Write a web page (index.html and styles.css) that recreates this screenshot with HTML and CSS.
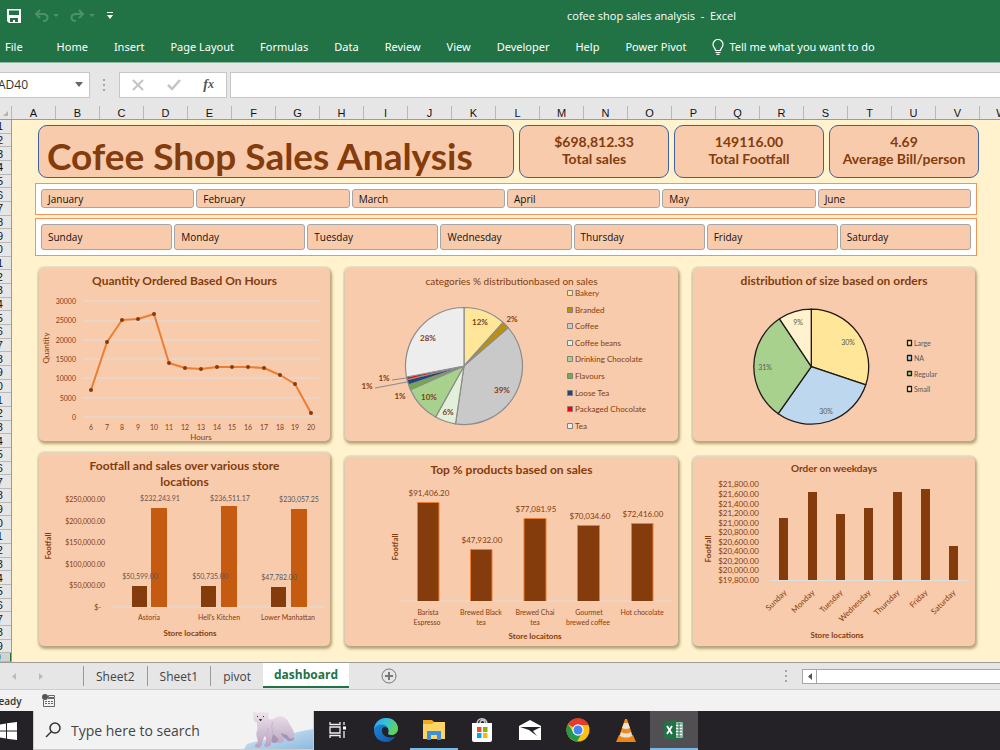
FILE: index.html
```
<!DOCTYPE html>
<html lang="en">
<head>
    <meta charset="UTF-8">
    <meta name="viewport" content="width=device-width, initial-scale=1.0">
    <title>cofee shop sales analysis - Excel</title>
    <link rel="stylesheet" href="styles.css">
</head>
<body>

<header class="ribbon">
    <div class="titlebar">
        <div class="quick-access">
            <button aria-label="Save"><svg width="14" height="14" viewBox="0 0 14 14"><path d="M0 0H14V14H2L0 12Z" fill="#fff"/><path d="M2 1.500H12V6H2ZM3 9H11V13H8V11H6V13H3Z" fill="#217346"/></svg></button>
            <button aria-label="Undo"><svg width="26" height="14" viewBox="0 0 26 14" fill="none" stroke="#4d9069" stroke-width="2"><path d="M6 1L2 5L6 9M2 5H9C15 5 15 12 9 12"/><path d="M19 5H25L22 8Z" fill="#4d9069" stroke="none"/></svg></button>
            <button aria-label="Redo"><svg width="26" height="14" viewBox="0 0 26 14" fill="none" stroke="#4d9069" stroke-width="2"><path d="M10 1L14 5L10 9M14 5H7C1 5 1 12 7 12"/><path d="M20 5H26L23 8Z" fill="#4d9069" stroke="none"/></svg></button>
            <button aria-label="Customize"><svg width="6" height="8" viewBox="0 0 6 8" fill="#fff"><path d="M0 0H6V1H0ZM0 3H6L3 7Z"/></svg></button>
        </div>
        <div class="doc-title">cofee shop sales analysis&nbsp; -&nbsp; Excel</div>
    </div>
    <nav class="tabs">
        <a href="#" class="file-tab">File</a>
        <a href="#">Home</a>
        <a href="#">Insert</a>
        <a href="#">Page Layout</a>
        <a href="#">Formulas</a>
        <a href="#">Data</a>
        <a href="#">Review</a>
        <a href="#">View</a>
        <a href="#">Developer</a>
        <a href="#">Help</a>
        <a href="#">Power Pivot</a>
        <a href="#" class="tell-me"><svg width="12" height="16" viewBox="0 0 12 16" fill="none" stroke="#fff" stroke-width="1.2"><path d="M3.500 11.500C3.500 9 1 8.500 1 5.500A5 5 0 0 1 11 5.500C11 8.500 8.500 9 8.500 11.500ZM3.500 13.500H8.500M4.500 15.300H7.500"/></svg>Tell me what you want to do</a>
    </nav>
</header>

<div class="formula-row">
    <div class="name-box">
        <input type="text" value="AD40" aria-label="Name box">
        <svg width="8" height="5" viewBox="0 0 8 5"><path d="M0 0H8L4 5Z" fill="#666"/></svg>
    </div>
    <svg class="dots" width="3" height="12" viewBox="0 0 3 12" fill="#a5a5a5"><path d="M0 0H2V2H0ZM0 5H2V7H0ZM0 10H2V12H0Z"/></svg>
    <div class="formula-buttons">
        <button aria-label="Cancel"><svg width="12" height="12" viewBox="0 0 12 12" stroke="#c4c4c4" stroke-width="2"><path d="M1 1L11 11M11 1L1 11"/></svg></button>
        <button aria-label="Enter"><svg width="14" height="12" viewBox="0 0 14 12" fill="none" stroke="#c4c4c4" stroke-width="2.500"><path d="M1 6L5 10L13 1"/></svg></button>
        <button class="fx">f<small>x</small></button>
    </div>
    <input class="formula-input" type="text" aria-label="Formula bar">
</div>

<div class="column-heads">
    <div class="corner"><svg width="5" height="5" viewBox="0 0 5 5"><path d="M5 0V5H0Z" fill="#b5b5b5"/></svg></div>
    <span>A</span><span>B</span><span>C</span><span>D</span><span>E</span><span>F</span><span>G</span><span>H</span><span>I</span><span>J</span><span>K</span><span>L</span><span>M</span><span>N</span><span>O</span><span>P</span><span>Q</span><span>R</span><span>S</span><span>T</span><span>U</span><span>V</span><span>W</span>
</div>

<main class="sheet">
    <div class="row-heads">
        <span>1</span><span>2</span><span>3</span><span>4</span><span>5</span><span>6</span><span>7</span><span>8</span><span>9</span><span>10</span>
        <span>11</span><span>12</span><span>13</span><span>14</span><span>15</span><span>16</span><span>17</span><span>18</span><span>19</span><span>20</span>
        <span>21</span><span>22</span><span>23</span><span>24</span><span>25</span><span>26</span><span>27</span><span>28</span><span>29</span><span>30</span>
        <span>31</span><span>32</span><span>33</span><span>34</span><span>35</span><span>36</span><span>37</span><span>38</span><span>39</span><span class="selected">40</span>
    </div>

    <div class="dashboard">
        <div class="summary">
            <h1>Cofee Shop Sales Analysis</h1>
            <div class="kpi">$698,812.33<br>Total sales</div>
            <div class="kpi">149116.00<br>Total Footfall</div>
            <div class="kpi">4.69<br>Average Bill/person</div>
        </div>

        <div class="slicers">
            <div class="slicer months">
                <button>January</button><button>February</button><button>March</button><button>April</button><button>May</button><button>June</button>
            </div>
            <div class="slicer days">
                <button>Sunday</button><button>Monday</button><button>Tuesday</button><button>Wednesday</button><button>Thursday</button><button>Friday</button><button>Saturday</button>
            </div>
        </div>

        <div class="charts">
            <section class="card">
                <h2>Quantity Ordered Based On Hours</h2>
                <svg viewBox="39 294 291 147">
                    <path class="grid" d="M83 301H319M83 321H319M83 340H319M83 359H319M83 378H319M83 398H319M83 417H319"/>
                    <g class="end">
                        <text x="76" y="301">30000</text><text x="76" y="320">25000</text><text x="76" y="340">20000</text><text x="76" y="359">15000</text><text x="76" y="378">10000</text><text x="76" y="398">5000</text><text x="76" y="417">0</text>
                    </g>
                    <polyline class="series" points="91,390 107,342 122,320 138,319 154,314 169,363 185,368 201,369 217,367 232,367 248,367 264,368 280,375 295,384 311,413"/>
                    <g fill="#843c0c">
                        <circle cx="91" cy="390" r="2"/><circle cx="107" cy="342" r="2"/><circle cx="122" cy="320" r="2"/><circle cx="138" cy="319" r="2"/><circle cx="154" cy="314" r="2"/><circle cx="169" cy="363" r="2"/><circle cx="185" cy="368" r="2"/><circle cx="201" cy="369" r="2"/><circle cx="217" cy="367" r="2"/><circle cx="232" cy="367" r="2"/><circle cx="248" cy="367" r="2"/><circle cx="264" cy="368" r="2"/><circle cx="280" cy="375" r="2"/><circle cx="295" cy="384" r="2"/><circle cx="311" cy="413" r="2"/>
                    </g>
                    <text x="91" y="427">6</text><text x="107" y="427">7</text><text x="122" y="427">8</text><text x="138" y="427">9</text><text x="154" y="427">10</text><text x="169" y="427">11</text><text x="185" y="427">12</text><text x="201" y="427">13</text><text x="217" y="427">14</text><text x="232" y="427">15</text><text x="248" y="427">16</text><text x="264" y="427">17</text><text x="280" y="427">18</text><text x="295" y="427">19</text><text x="311" y="427">20</text>
                    <text class="medium" x="201" y="437">Hours</text>
                    <text class="medium" transform="translate(46 348) rotate(-90)">Quantity</text>
                </svg>
            </section>

            <section class="card">
                <h2 class="light">categories % distributionbased on sales</h2>
                <svg viewBox="345 289 333 152">
                    <g stroke="#8c8c8c" stroke-width="1.200" stroke-linejoin="round">
                        <path fill="#ffe699" d="M464 366V307.500A58.500 58.500 0 0 1 503.100 322.500Z"/>
                        <path fill="#bf9000" d="M464 366L503.100 322.500A58.500 58.500 0 0 1 508.300 327.800Z"/>
                        <path fill="#c9c9c9" d="M464 366L508.300 327.800A58.500 58.500 0 0 1 455.500 423.900Z"/>
                        <path fill="#e2f0d9" d="M464 366L455.500 423.900A58.500 58.500 0 0 1 435.500 417.100Z"/>
                        <path fill="#a9d18e" d="M464 366L435.500 417.100A58.500 58.500 0 0 1 410.500 389.700Z"/>
                        <path fill="#70ad47" d="M464 366L410.500 389.700A58.500 58.500 0 0 1 408.600 384.800Z"/>
                        <path fill="#264478" d="M464 366L408.600 384.800A58.500 58.500 0 0 1 407.100 379.600Z"/>
                        <path fill="#ff0000" d="M464 366L407.100 379.600A58.500 58.500 0 0 1 406.500 377Z"/>
                        <path fill="#ededed" d="M464 366L406.500 377A58.500 58.500 0 0 1 464 307.500Z"/>
                        <path fill="none" d="M392 380L406 378M375 388L407 382"/>
                    </g>
                    <g class="large strong">
                        <text x="480" y="322">12%</text><text x="512" y="319">2%</text><text x="502" y="390">39%</text><text x="448" y="412">6%</text><text x="429" y="397">10%</text><text x="400" y="396">1%</text><text x="367" y="386">1%</text><text x="384" y="378">1%</text><text x="428" y="338">28%</text>
                    </g>
                    <g stroke="#7f7f7f">
                        <path fill="#ffe699" d="M567.500 290.500h5v5h-5z"/><path fill="#bf9000" d="M567.500 307.500h5v5h-5z"/><path fill="#c9c9c9" d="M567.500 323.500h5v5h-5z"/><path fill="#e2f0d9" d="M567.500 340.500h5v5h-5z"/><path fill="#a9d18e" d="M567.500 356.500h5v5h-5z"/><path fill="#70ad47" d="M567.500 373.500h5v5h-5z"/><path fill="#264478" d="M567.500 390.500h5v5h-5z"/><path fill="#ff0000" d="M567.500 406.500h5v5h-5z"/><path fill="#ededed" d="M567.500 423.500h5v5h-5z"/>
                    </g>
                    <g class="medium start">
                        <text x="575" y="293">Bakery</text><text x="575" y="310">Branded</text><text x="575" y="326">Coffee</text><text x="575" y="343">Coffee beans</text><text x="575" y="359">Drinking Chocolate</text><text x="575" y="376">Flavours</text><text x="575" y="393">Loose Tea</text><text x="575" y="409">Packaged Chocolate</text><text x="575" y="426">Tea</text>
                    </g>
                </svg>
            </section>

            <section class="card">
                <h2>distribution of size based on orders</h2>
                <svg viewBox="693 294 282 147">
                    <g stroke="#1f1a17" stroke-width="1.300" stroke-linejoin="round">
                        <path fill="#ffe699" d="M811.300 366.700V309.200A57.500 57.500 0 0 1 865.800 384.800Z"/>
                        <path fill="#bdd7ee" d="M811.300 366.700L865.800 384.800A57.500 57.500 0 0 1 778.200 413.700Z"/>
                        <path fill="#a9d18e" d="M811.300 366.700L778.200 413.700A57.500 57.500 0 0 1 779.500 318.800Z"/>
                        <path fill="#fff2cc" d="M811.300 366.700L779.500 318.800A57.500 57.500 0 0 1 811.300 309.200Z"/>
                        <path fill="#ffe699" d="M907.500 340.500h4v5h-4z"/><path fill="#bdd7ee" d="M907.500 355.500h4v5h-4z"/><path fill="#a9d18e" d="M907.500 371.500h4v4h-4z"/><path fill="#fff2cc" d="M907.500 386.500h4v5h-4z"/>
                    </g>
                    <g class="dark">
                        <text x="848" y="342">30%</text><text x="826" y="411">30%</text><text x="765" y="367">31%</text><text x="798" y="322">9%</text>
                    </g>
                    <g class="dark start">
                        <text x="914" y="343">Large</text><text x="914" y="358">NA</text><text x="914" y="374">Regular</text><text x="914" y="389">Small</text>
                    </g>
                </svg>
            </section>

            <section class="card">
                <h2>Footfall and sales over various store locations</h2>
                <svg viewBox="39 490 291 156">
                    <g class="end">
                        <text x="105" y="499">$250,000.00</text><text x="105" y="521">$200,000.00</text><text x="105" y="542">$150,000.00</text><text x="105" y="564">$100,000.00</text><text x="105" y="585">$50,000.00</text><text x="101" y="607">$-</text>
                    </g>
                    <path class="grid" d="M113 607H324"/>
                    <path fill="#843c0c" d="M132 586h15v21h-15zM201 586h15v21h-15zM271 587h15v20h-15z"/>
                    <path fill="#c55a11" d="M151 508h16v99h-16zM221 506h16v101h-16zM291 509h16v98h-16z"/>
                    <g class="dark">
                        <text x="160" y="498">$232,243.91</text><text x="230" y="498">$236,511.17</text><text x="299" y="499">$230,057.25</text>
                        <text x="140" y="576">$50,599.00</text><text x="210" y="576">$50,735.00</text><text x="279" y="577">$47,782.00</text>
                    </g>
                    <text x="149" y="617">Astoria</text><text x="219" y="617">Hell's Kitchen</text><text x="288" y="617">Lower Manhattan</text>
                    <text class="bold" x="190" y="633">Store locations</text>
                    <text class="bold" transform="translate(48 546) rotate(-90)">Footfall</text>
                </svg>
            </section>

            <section class="card short">
                <h2>Top % products based on sales</h2>
                <svg viewBox="345 483 333 163">
                    <path class="grid" d="M401 601H671"/>
                    <path fill="#843c0c" stroke="#ed7d31" d="M417.500 601V502.500h21.500V601M470.500 601V549.500h21.500V601M524 601V518.500h22V601M577.500 601V525.500h22V601M631.500 601V523.500h21.500V601"/>
                    <g class="large">
                        <text x="429" y="493">$91,406.20</text><text x="482" y="540">$47,932.00</text><text x="536" y="509">$77,081.95</text><text x="590" y="516">$70,034.60</text><text x="643" y="514">$72,416.00</text>
                    </g>
                    <text x="428" y="612">Barista</text><text x="427" y="622">Espresso</text>
                    <text x="481" y="612">Brewed Black</text><text x="481" y="622">tea</text>
                    <text x="535" y="612">Brewed Chai</text><text x="535" y="622">tea</text>
                    <text x="589" y="612">Gourmet</text><text x="588" y="622">brewed coffee</text>
                    <text x="642" y="612">Hot chocolate</text>
                    <text class="bold" x="535" y="636">Store locaitons</text>
                    <text class="bold" transform="translate(395 547) rotate(-90)">Footfall</text>
                </svg>
            </section>

            <section class="card short">
                <h2 class="small">Order on weekdays</h2>
                <svg viewBox="693 479 282 167">
                    <g class="large end">
                        <text x="759" y="484">$21,800.00</text><text x="759" y="494">$21,600.00</text><text x="759" y="504">$21,400.00</text><text x="759" y="513">$21,200.00</text><text x="759" y="523">$21,000.00</text><text x="759" y="532">$20,800.00</text><text x="759" y="542">$20,600.00</text><text x="759" y="551">$20,400.00</text><text x="759" y="561">$20,200.00</text><text x="759" y="570">$20,000.00</text><text x="759" y="580">$19,800.00</text>
                    </g>
                    <path class="grid" d="M770 580.500H967"/>
                    <path fill="#843c0c" d="M779 518h9v62h-9zM808 492h9v88h-9zM836 514h9v66h-9zM864 508h9v72h-9zM893 492h9v88h-9zM921 489h9v91h-9zM949 546h9v34h-9z"/>
                    <g class="medium end">
                        <text transform="translate(785 591) rotate(-45)">Sunday</text><text transform="translate(813 591) rotate(-45)">Monday</text><text transform="translate(841 591) rotate(-45)">Tuesday</text><text transform="translate(869 591) rotate(-45)">Wednesday</text><text transform="translate(898 591) rotate(-45)">Thursday</text><text transform="translate(926 591) rotate(-45)">Friday</text><text transform="translate(954 591) rotate(-45)">Saturday</text>
                    </g>
                    <text class="bold" x="837" y="635">Store locations</text>
                    <text class="bold" transform="translate(708 549) rotate(-90)">Footfall</text>
                </svg>
            </section>
        </div>
    </div>
</main>

<div class="sheet-tabs">
    <div class="arrows">
        <svg width="4" height="7" viewBox="0 0 4 7"><path d="M4 0V7L0 3.500Z" fill="#bbb"/></svg>
        <svg width="4" height="7" viewBox="0 0 4 7"><path d="M0 0V7L4 3.500Z" fill="#bbb"/></svg>
    </div>
    <button class="sheet-tab">Sheet2</button>
    <button class="sheet-tab">Sheet1</button>
    <button class="sheet-tab">pivot</button>
    <button class="sheet-tab active">dashboard</button>
    <button class="add-sheet" aria-label="New sheet"><svg width="16" height="16" viewBox="0 0 16 16" fill="none" stroke="#777"><circle cx="8" cy="8" r="7"/><path d="M8 4V12M4 8H12" stroke-width="2"/></svg></button>
    <svg class="tab-dots" width="3" height="12" viewBox="0 0 3 12" fill="#a5a5a5"><path d="M0 0H2V2H0ZM0 5H2V7H0ZM0 10H2V12H0Z"/></svg>
    <div class="scrollbar"><button aria-label="Scroll left"><svg width="4" height="7" viewBox="0 0 4 7"><path d="M4 0V7L0 3.500Z" fill="#555"/></svg></button></div>
</div>

<div class="status-bar">
    <span>Ready</span>
    <svg width="13" height="13" viewBox="0 0 13 13"><path d="M6.500 1.500H12.500V3.500H6.500ZM1.500 6V12.500H12.500V4.500H6" fill="none" stroke="#666"/><path d="M3 7H5V8H3ZM6 7H8V8H6ZM9 7H11V8H9ZM3 9H5V10H3ZM6 9H8V10H6ZM9 9H11V10H9Z" fill="#666"/><circle cx="3" cy="3" r="3" fill="#555"/></svg>
</div>

<footer class="taskbar">
    <button class="start" aria-label="Start"><svg width="20" height="18" viewBox="0 0 20 18" fill="#fff"><path d="M0 3L9 1.500V8.500H0ZM10 1.300L20 0V8.500H10ZM0 9.500H9V16.500L0 15ZM10 9.500H20V18L10 16.700Z"/></svg></button>
    <label class="search">
        <svg width="16" height="16" viewBox="0 0 16 16" fill="none" stroke="#333" stroke-width="1.500"><circle cx="10" cy="6" r="5"/><path d="M6.500 9.500L1 15"/></svg>
        <input type="text" placeholder="Type here to search" aria-label="Search">
        <svg class="bear" width="69" height="38" viewBox="0 0 69 38">
            <defs>
                <linearGradient id="ice" x1="0" y1="0" x2="1" y2="1"><stop offset="0" stop-color="#dcebf5"/><stop offset="1" stop-color="#8db9df"/></linearGradient>
                <linearGradient id="fur" x1="0" y1="0" x2="0" y2="1"><stop offset="0" stop-color="#efe4ec"/><stop offset="1" stop-color="#b7a2bf"/></linearGradient>
            </defs>
            <path d="M0 38L3 33L14 30L30 27L46 23L58 20L69 18V38Z" fill="url(#ice)"/>
            <path d="M28 18L40 20L48 18L50 28C48 31 44 31 42 28L36 24L34 31C30 33 27 32 27 29Z" fill="#a793b4"/>
            <path d="M9 3C8 0 12 0 13 2C16 0 19 0 21 2C24 0 26 2 24 5C24 8 26 9 29 8C35 3 42 5 45 12C48 17 51 21 50 26C48 29 45 28 44 25C42 23 39 23 37 22C38 25 41 28 40 30C37 33 33 32 33 31L35 29C33 26 31 25 29 23C28 27 27 31 27 34C24 37 20 36 20 34L22 31C22 28 22 26 21 25C19 28 18 31 18 34C16 38 10 37 11 34L14 31C14 28 11 24 13 20C14 17 13 15 13 12C10 11 9 8 9 3Z" fill="url(#fur)"/>
            <path d="M29 11C27 15 28 19 29 23M21 25C23 23 24 20 24 17" fill="none" stroke="#c6b3ca"/>
            <path d="M15 8h3l-1 2h-1zM13 5h1v1h-1zM19 5h1v1h-1z" fill="#3a3040"/>
        </svg>
    </label>
    <button class="task" aria-label="Task View"><svg width="18" height="16" viewBox="0 0 18 16" fill="none" stroke="#eee" stroke-width="1.300"><path d="M1 0V2.500H11V0M1 16V13.500H11V16M1 5H11V11H1ZM15 0V3M15 9V16"/><path d="M14 4.500h3v3h-3z" fill="#fff" stroke="none"/></svg></button>
    <button class="task" aria-label="Edge">
        <svg width="24" height="24" viewBox="0 0 24 24">
            <defs>
                <linearGradient id="edge" x1="0" y1="0" x2="1" y2="0.400"><stop offset="0" stop-color="#2f9fe8"/><stop offset="0.500" stop-color="#35c1d8"/><stop offset="1" stop-color="#62d35a"/></linearGradient>
                <linearGradient id="edge-deep" x1="0" y1="0" x2="1" y2="1"><stop offset="0" stop-color="#1b8fe0"/><stop offset="1" stop-color="#124f9c"/></linearGradient>
            </defs>
            <path d="M0 12C0 5 5 0 12 0C19 0 24 5 24 10.500C24 14.500 21 17 17.500 17C15 17 13.800 16 14.300 15C15.500 12 14 9.500 11 9C8.500 9 7.500 11 8 14C9 18 14 21 21.500 18.500C19 22 16 24 12 24C5 24 0 19 0 12Z" fill="url(#edge-deep)"/>
            <path d="M0 11.500C1 4 6 0 12 0C19 0 24 5 24 10.500C24 14.500 21 17 17.500 17C15 17 13.800 16 14.300 15C16 11 12.500 6.500 8 6.500C4 6.500 1 8.500 0 11.500Z" fill="url(#edge)"/>
        </svg>
    </button>
    <button class="task open" aria-label="File Explorer"><svg width="22" height="20" viewBox="0 0 22 20"><path d="M0 0H9L11 2H21V19H0Z" fill="#f2a91f"/><path d="M0 4H9L11 2H22V19H0Z" fill="#fcd565"/><path d="M4 11H18V20H14V15H8V20H4Z" fill="#3c92d6"/></svg></button>
    <button class="task" aria-label="Store"><svg width="22" height="24" viewBox="0 0 22 24"><path d="M6 6C6 -1 16 -1 16 6M9 6C9 1 14 1 14 6" fill="none" stroke="#ccc" stroke-width="1.500"/><path d="M1 5H21V22Q21 24 19 24H3Q1 24 1 22Z" fill="#fff"/><path d="M6 9h4.500v5H6z" fill="#f25022"/><path d="M12 9h4.500v5H12z" fill="#7fba00"/><path d="M6 15h4.500v5H6z" fill="#00a4ef"/><path d="M12 15h4.500v5H12z" fill="#ffb900"/></svg></button>
    <button class="task" aria-label="Mail"><svg width="22" height="20" viewBox="0 0 22 20"><path d="M0 6L11 0L22 6V20H0Z" fill="#fff"/><path d="M1 7H22L14 11L18 16L10 10Z" fill="#242226"/></svg></button>
    <button class="task" aria-label="Chrome"><svg width="24" height="24" viewBox="0 0 24 24"><circle cx="12" cy="12" r="11.500" fill="#fbc116"/><path d="M12 12L2 6.300A11.500 11.500 0 0 1 22.500 7H12Z" fill="#e33b2e"/><path d="M2 6.300A11.500 11.500 0 0 0 11 23.500L16.300 14.500L8 15Z" fill="#229a4b"/><circle cx="12" cy="12" r="5.700" fill="#fff"/><circle cx="12" cy="12" r="4.500" fill="#4285f4"/></svg></button>
    <button class="task" aria-label="VLC"><svg width="20" height="24" viewBox="0 0 20 24"><path d="M3 17H17L20 24H0Z" fill="#ee8511"/><path d="M9 1H11L17 19Q10 23 3 19Z" fill="#f58a15"/><path d="M8 5H12L14 10Q10 12 6 10ZM5 14Q10 17 15 14L16 18Q10 21 4 18Z" fill="#e8e4e2"/></svg></button>
    <button class="task current" aria-label="Excel"><svg width="20" height="20" viewBox="0 0 20 20"><path d="M10 2H19V18H10Z" fill="#fff" stroke="#217346"/><path d="M12 4H18M12 7H18M12 10H18M12 13H18M12 16H18M15 3V17" stroke="#217346"/><path d="M0 2L12 0V20L0 18Z" fill="#217346"/><path d="M3 6L8 14M8 6L3 14" stroke="#fff" stroke-width="1.800"/></svg></button>
</footer>

</body>
</html>
```
FILE: styles.css
```
* { box-sizing: border-box; }
body { margin: 0; min-height: 100vh; display: flex; flex-direction: column; font-family: "Open Sans", sans-serif; font-size: 11px; color: #333; background-color: #e6e6e6; overflow: hidden; }
button { margin: 0; padding: 0; border: none; background: none; font: inherit; color: inherit; cursor: pointer; display: flex; align-items: center; }
a { color: inherit; text-decoration: none; }
input { font: inherit; color: inherit; border: none; outline: none; padding: 0; min-width: 0; background: none; }
svg { flex: none; }

/* ribbon */
.ribbon { background-color: #217346; color: #fff; height: 63px; border-bottom: 1px solid #8fb9a2; }
.titlebar { display: flex; align-items: center; height: 31px; padding-left: 7px; }
.quick-access { display: flex; align-items: center; gap: 9px; width: 120px; }
.quick-access button:nth-child(2) { margin-left: 4px; }
.quick-access button:last-child { margin-left: 3px; }
.doc-title { flex: 1; padding-left: 176px; text-align: center; }
.tabs { display: flex; align-items: center; gap: 26px; height: 31px; padding-left: 5px; font-family: "Noto Sans", sans-serif; white-space: nowrap; }
.file-tab { margin-right: 8px; }
.tell-me { display: flex; align-items: center; gap: 5px; }

/* formula bar */
.formula-row { display: flex; align-items: center; height: 43px; }
.name-box { display: flex; align-items: center; width: 90px; height: 26px; padding-right: 6px; border: 1px solid #c6c6c6; border-left: none; background-color: #fff; overflow: hidden; }
.name-box input { flex: 1; font-size: 12px; text-indent: -2px; }
.dots { margin: 0 13px; }
.formula-buttons { display: flex; align-items: center; justify-content: space-between; width: 108px; height: 26px; padding: 0 12px; border: 1px solid #c6c6c6; background-color: #fff; }
.fx { font: italic bold 14px "Liberation Serif", serif; color: #555; }
.fx small { font-size: 12px; }
.formula-input { flex: 1; height: 26px; margin-left: 3px; border: 1px solid #c6c6c6; border-right: none; background-color: #fff; }

/* grid headings */
.column-heads { display: flex; height: 14px; border-bottom: 1px solid #9b9b9b; font-family: "Liberation Sans", sans-serif; font-size: 11px; line-height: 14px; color: #111; overflow: hidden; }
.column-heads span { flex: 0 0 44px; text-align: center; border-right: 1px solid #b8b8b8; }
.corner { display: flex; align-items: flex-end; justify-content: flex-end; flex: 0 0 12px; padding: 0 3px 3px 0; border-right: 1px solid #b8b8b8; }
.sheet { display: flex; flex: 1; background-color: #fff2cc; }
.row-heads { display: flex; flex-direction: column; flex: 0 0 12px; border-right: 1px solid #9b9b9b; overflow: hidden; font-family: "Liberation Sans", sans-serif; font-size: 11px; color: #111; background-color: #e6e6e6; }
.row-heads span { display: flex; align-items: center; justify-content: flex-end; flex: 1 1 0; min-height: 0; width: 12px; padding-right: 9px; border-bottom: 1px solid #b8b8b8; line-height: 12px; }
.row-heads .selected { flex-grow: 0.6; color: #217346; background-color: #d2d2d2; border-right: 2px solid #217346; }

/* dashboard */
.dashboard { flex: 1; padding: 5px 21px 16px 26px; font-family: Lato, sans-serif; color: #843c0c; }
.summary { display: grid; grid-template-columns: 476fr 150fr 150fr 150fr; gap: 5px; }
h1, .kpi { margin: 0; height: 53px; border: 1px solid #41609c; border-radius: 9px; background-color: #f8cbad; font-weight: bold; white-space: nowrap; }
h1 { padding: 4px 0 0 8px; font-size: 37px; line-height: 52px; }
.kpi { padding-top: 7px; font-size: 14px; line-height: 17px; text-align: center; }
.slicers { display: grid; gap: 3px; margin: 5px 2px 0 -3px; }
.slicer { display: grid; grid-auto-flow: column; grid-auto-columns: 1fr; gap: 2px; padding: 5px; border: 1px solid #f0965a; background-color: #fff; }
.slicer button { padding-left: 6px; border: 1px solid #a6a6a6; border-radius: 3px; background-color: #f8cbad; font-family: "Open Sans", sans-serif; font-size: 10px; color: #111; }
.months { height: 32px; padding-bottom: 6px; }
.days { height: 38px; }
.charts { display: grid; grid-template-columns: 291fr 333fr 282fr; gap: 12px 15px; margin: 12px 4px 0 1px; }
.card { display: flex; flex-direction: column; justify-content: space-between; border-radius: 5px; background-color: #f8cbad; box-shadow: 1px 2px 3px 1px #b8a67e, 0 0 0 2px #e6e2cb; }
.short { margin-top: 4px; }
.card svg { display: block; width: 100%; height: auto; }
h2 { margin: 0; padding: 5px 45px 0; font-size: 12px; line-height: 16px; text-align: center; }
.light { font-size: 10px; font-weight: normal; }
.small { padding-top: 3px; font-size: 10px; }

/* chart parts */
.card text { font-size: 7px; fill: #843c0c; text-anchor: middle; dominant-baseline: central; }
.card .end text { text-anchor: end; }
.card .start text { text-anchor: start; }
.card .medium, .card .medium text { font-size: 8px; }
.card .large text { font-size: 8px; }
.card .strong text { font-weight: bold; }
.card .bold { font-size: 8px; font-weight: bold; }
.card .dark text { fill: #595959; }
.grid { fill: none; stroke: #dedede; }
.series { fill: none; stroke: #ed7d31; stroke-width: 2px; stroke-linejoin: round; }

/* sheet tabs */
.sheet-tabs { display: flex; align-items: center; height: 28px; border-top: 1px solid #9b9b9b; border-bottom: 1px solid #cfcfcf; font-size: 12px; color: #444; }
.arrows { display: flex; justify-content: space-between; width: 83px; padding: 0 40px 0 12px; }
.sheet-tab { justify-content: center; height: 20px; padding: 0 12px; border-left: 1px solid #999; }
.active { height: 25px; margin-bottom: 2px; padding: 0 11px; border-left: none; border-bottom: 2px solid #217346; background-color: #fff; color: #217346; font-weight: bold; }
.add-sheet { margin-left: 32px; }
.tab-dots { margin: 0 14px 0 auto; }
.scrollbar { width: 198px; height: 15px; border: 1px solid #a6a6a6; border-right: none; background-color: #fff; }
.scrollbar button { justify-content: center; width: 14px; height: 13px; border-right: 1px solid #a6a6a6; }

/* status bar */
.status-bar { display: flex; align-items: center; gap: 20px; height: 21px; margin-left: -8px; background-color: #f2f2f2; font-size: 10px; font-weight: 600; }

/* taskbar */
.taskbar { display: flex; height: 39px; background-color: #242226; }
.start { width: 33px; }
.start svg { margin-left: -3px; }
.search { display: flex; align-items: center; width: 281px; padding-left: 11px; border: 1px solid #ccc; border-top: none; background-color: #f2f2f2; }
.search input { flex: 1; margin-left: 10px; font-size: 14px; }
.search input::placeholder { color: #444; opacity: 1; }
.bear { align-self: flex-end; }
.task { justify-content: center; width: 48px; border-bottom: 2px solid transparent; }
.open { border-bottom-color: #76b9ed; }
.current { background-color: #514f52; border-bottom-color: #76b9ed; }
```
